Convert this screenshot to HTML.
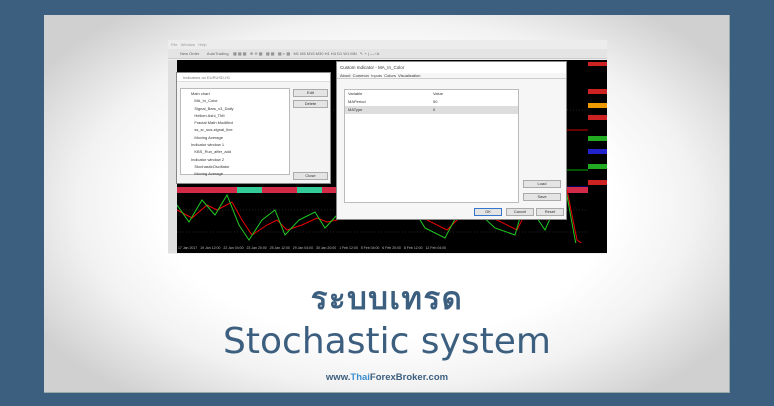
<!DOCTYPE html>
<html><head><meta charset="utf-8"><style>
*{margin:0;padding:0;box-sizing:border-box}
body{width:774px;height:406px;background:#3c5f80;position:relative;overflow:hidden;font-family:"Liberation Sans",sans-serif}
.panel{position:absolute;left:44px;top:15px;width:686px;height:378px;background:radial-gradient(ellipse 60% 65% at 50% 50%,#fff 55%,#f2f2f2 75%,#d0d0d0 100%);border-right:1px solid #9aa;border-bottom:1px solid #9aa}
.shot{position:absolute;left:168px;top:40px;width:439px;height:214px;background:#f0f0f0;font-size:5px;color:#333}
.chart{position:absolute;left:9px;top:20px;width:411px;height:193px;background:#000}
.axis{position:absolute;left:420px;top:20px;width:19px;height:193px;background:#000}
.dlg{position:absolute;background:#f4f4f4;border:1px solid #888}
.btn{position:absolute;background:#e4e4e4;border:1px solid #aaa;font-size:4px;text-align:center;line-height:6px}
.t1{position:absolute;left:0;width:774px;top:282px;text-align:center;color:#3d5f7f;font-size:31px;line-height:34px;font-family:"DejaVu Sans","Noto Sans CJK SC",sans-serif;font-weight:bold;letter-spacing:1.5px}
.t2{position:absolute;left:0;width:774px;top:322px;text-align:center;color:#3d5f7f;font-size:36px;line-height:40px;font-family:"DejaVu Sans",sans-serif;letter-spacing:0px}
.url{position:absolute;left:0;width:774px;top:372px;text-align:center;color:#3d5f7f;font-size:9.5px;font-weight:bold}
</style></head><body>
<div class="panel"></div>
<div class="shot">
 <div style="position:absolute;left:0;top:0;width:439px;height:9px;background:#ececec;font-size:4px;line-height:9px;color:#999;padding-left:3px">File &nbsp; Window &nbsp; Help</div>
 <div style="position:absolute;left:0;top:9px;width:439px;height:10px;background:#e4e4e4;border-bottom:1px solid #ccc;font-size:4px;line-height:10px;color:#666;padding-left:12px;white-space:nowrap">New Order &nbsp;&nbsp;&nbsp;&nbsp;&nbsp; AutoTrading &nbsp;&nbsp; ▦ ▦ ▦ &nbsp; ⊕ ⊖ ▦ &nbsp; ▦ ▦ &nbsp; ▦ ◐ ▦ &nbsp; M1 M5 M15 M30 H1 H4 D1 W1 MN &nbsp; ↖ + | — ⁄ A</div>
 <div style="position:absolute;left:0;top:20px;width:9px;height:193px;background:#e0e0e0"></div>
 <div class="chart">
  <svg width="411" height="193" viewBox="0 0 411 193">
   <g stroke="#444" stroke-dasharray="1,2" stroke-width="0.5"><line x1="0" y1="150" x2="411" y2="150"/><line x1="0" y1="172" x2="411" y2="172"/><line x1="0" y1="50" x2="411" y2="50"/></g>
   <line x1="390" y1="70" x2="411" y2="70" stroke="#c00"/>
   <line x1="390" y1="110" x2="411" y2="110" stroke="#0a0"/>
   <line x1="390" y1="127" x2="411" y2="127" stroke="#00c"/>
   <rect x="0" y="127" width="411" height="6" fill="#d32a48"/>
   <rect x="60" y="127" width="25" height="6" fill="#3c9"/><rect x="120" y="127" width="25" height="6" fill="#3c9"/><rect x="220" y="127" width="40" height="6" fill="#3c9"/>
   <polyline fill="none" stroke="#e00" stroke-width="1" points="0,150 15,158 30,145 40,150 55,142 65,160 75,175 90,165 100,160 110,170 125,165 140,158 150,162 160,160 175,148 190,140 205,150 215,128 230,140 250,160 270,170 290,150 320,160 340,170 350,150 370,160 390,130 400,180 411,188"/>
   <polyline fill="none" stroke="#2c2" stroke-width="1" points="0,145 12,162 25,140 38,155 50,135 62,165 72,180 85,160 98,150 108,175 122,160 138,152 148,168 160,155 172,140 188,133 200,158 212,120 228,135 248,168 268,178 288,140 318,168 338,175 348,140 368,170 388,125 400,190 411,190"/>
  </svg>
 </div>
 <div class="axis"></div>
 <div style="position:absolute;left:420px;top:22px;width:19px;height:4px;background:#c22"></div>
 <div style="position:absolute;left:420px;top:49px;width:19px;height:5px;background:#c22"></div>
 <div style="position:absolute;left:420px;top:63px;width:19px;height:5px;background:#e90"></div>
 <div style="position:absolute;left:420px;top:75px;width:19px;height:5px;background:#c22"></div>
 <div style="position:absolute;left:420px;top:96px;width:19px;height:5px;background:#2a2"></div>
 <div style="position:absolute;left:420px;top:109px;width:19px;height:5px;background:#22c"></div>
 <div style="position:absolute;left:420px;top:124px;width:19px;height:5px;background:#2a2"></div>
 <div style="position:absolute;left:420px;top:140px;width:19px;height:5px;background:#c22"></div>
 <div style="position:absolute;left:9px;top:203px;width:411px;height:10px;background:#000;color:#bbb;font-size:3.5px;line-height:10px;white-space:nowrap;overflow:hidden">&nbsp;17 Jan 2017 &nbsp; 19 Jan 12:00 &nbsp; 22 Jan 04:00 &nbsp; 23 Jan 20:00 &nbsp; 25 Jan 12:00 &nbsp; 29 Jan 04:00 &nbsp; 30 Jan 20:00 &nbsp; 1 Feb 12:00 &nbsp; 5 Feb 04:00 &nbsp; 6 Feb 20:00 &nbsp; 8 Feb 12:00 &nbsp; 12 Feb 04:00</div>
 <div class="dlg" style="left:8px;top:32px;width:155px;height:112px">
  <div style="height:9px;background:#fff;border-bottom:1px solid #ddd;font-size:4px;line-height:9px;padding-left:6px;color:#777">Indicators on EURUSD,H1</div>
  <div style="position:absolute;left:3px;top:15px;width:110px;height:87px;background:#fff;border:1px solid #bbb;font-size:4px;line-height:7.3px;padding:1px 0 0 10px;color:#333">Main chart<br>&nbsp;&nbsp;&nbsp;MA_In_Color<br>&nbsp;&nbsp;&nbsp;Signal_Bars_v3_Daily<br>&nbsp;&nbsp;&nbsp;Heiken Ashi_TMI<br>&nbsp;&nbsp;&nbsp;Fractal Math Modified<br>&nbsp;&nbsp;&nbsp;ss_sr_sus-signal_line<br>&nbsp;&nbsp;&nbsp;Moving Average<br>Indicator window 1<br>&nbsp;&nbsp;&nbsp;KBS_Run_after_add<br>Indicator window 2<br>&nbsp;&nbsp;&nbsp;StochasticOscillator<br>&nbsp;&nbsp;&nbsp;Moving Average</div>
  <div class="btn" style="left:116px;top:16px;width:35px;height:8px">Edit</div>
  <div class="btn" style="left:116px;top:27px;width:35px;height:8px">Delete</div>
  <div class="btn" style="left:116px;top:99px;width:35px;height:8px">Close</div>
 </div>
 <div class="dlg" style="left:168px;top:21px;width:231px;height:159px;background:#f6f6f6">
  <div style="height:11px;background:#fff;font-size:4.5px;line-height:11px;padding-left:3px">Custom Indicator - MA_In_Color</div>
  <div style="height:6px;font-size:4px;padding-left:3px;border-bottom:1px solid #ccc">About &nbsp;Common &nbsp;<span style="background:#fff">Inputs</span> &nbsp;Colors &nbsp;Visualization</div>
  <div style="position:absolute;left:7px;top:27px;width:175px;height:114px;background:#fff;border:1px solid #bbb;font-size:4px;line-height:8px">
   <div style="padding-left:3px">Variable<span style="position:absolute;left:88px">Value</span></div>
   <div style="padding-left:3px">MAPeriod<span style="position:absolute;left:88px">50</span></div>
   <div style="padding-left:3px;background:#ddd;width:173px">MAType<span style="position:absolute;left:88px">0</span></div>
  </div>
  <div class="btn" style="left:186px;top:118px;width:38px;height:8px">Load</div>
  <div class="btn" style="left:186px;top:131px;width:38px;height:8px">Save</div>
  <div class="btn" style="left:137px;top:146px;width:28px;height:8px;border-color:#37c">OK</div>
  <div class="btn" style="left:169px;top:146px;width:28px;height:8px">Cancel</div>
  <div class="btn" style="left:199px;top:146px;width:28px;height:8px">Reset</div>
 </div>
</div>
<div class="t1">ระบบเทรด</div>
<div class="t2">Stochastic system</div>
<div class="url">www.<span style="color:#3a8fd0">Thai</span>ForexBroker.com</div>
</body></html>
